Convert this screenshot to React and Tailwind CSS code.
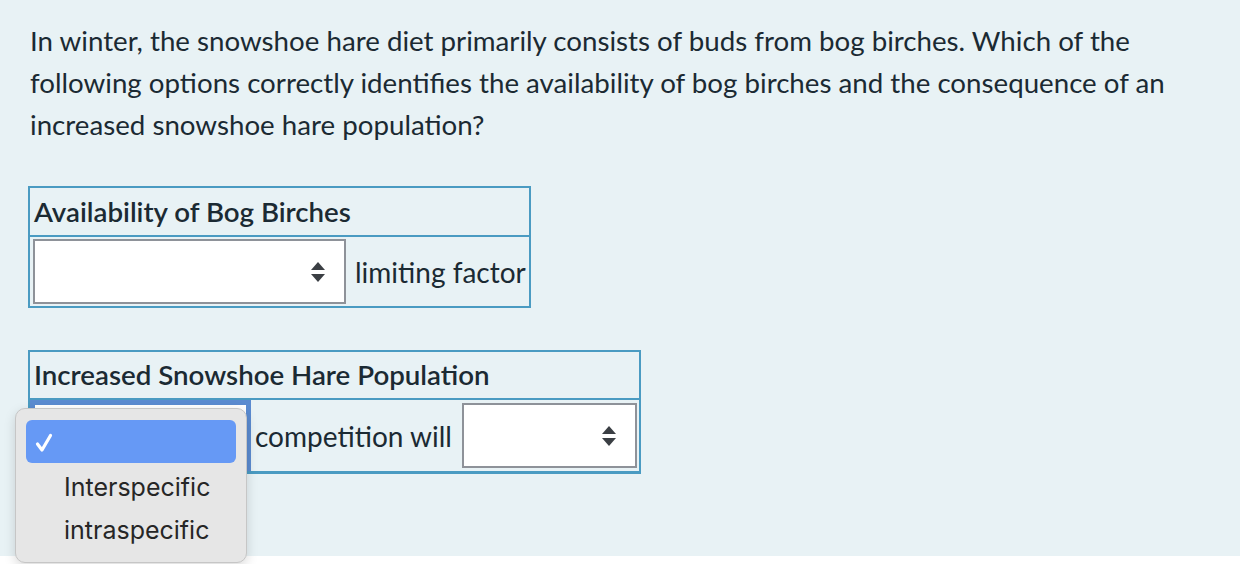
import { useState } from "react";

const font = { fontFamily: "Lato, 'Open Sans', sans-serif" };

function SelectArrows() {
  return (
    <svg width="16" height="24" viewBox="0 0 16 24" className="shrink-0">
      <path d="M8 2 L15 10 H1 Z" fill="#3b3f44" />
      <path d="M8 22 L15 14 H1 Z" fill="#3b3f44" />
    </svg>
  );
}

function SelectBox({ width, focused = false }) {
  return (
    <div
      className={`flex h-[65px] items-center justify-end border-2 border-[#8e9299] bg-white pr-[18px] ${width}`}
    >
      {!focused && <SelectArrows />}
    </div>
  );
}

function Dropdown() {
  const [picked] = useState(0);
  const options = ["", "Interspecific", "intraspecific"];
  return (
    <div
      className="absolute left-[15px] top-[408px] z-10 flex h-[155px] w-[232px] flex-col rounded-[10px] border border-[#c6c6c6] bg-[#e6e6e6] px-[10px] pt-[11px] shadow-[0_4px_12px_rgba(0,0,0,0.15)]"
      style={{ fontFamily: "Inter, 'Liberation Sans', sans-serif" }}
    >
      {options.map((opt, i) => (
        <div
          key={i}
          className={`flex h-[43px] shrink-0 items-center rounded-[6px] pl-[9px] text-[25px] text-[#262626] ${
            i === picked ? "bg-[#6699f5]" : ""
          } ${i === 1 ? "mt-[3px]" : ""}`}
        >
          <span className="w-[29px]">
            {i === picked && (
              <svg width="18" height="20" viewBox="0 0 18 20" className="mt-[3px]">
                <path
                  d="M2.5 11 L7 17 L15.5 2.5"
                  fill="none"
                  stroke="white"
                  strokeWidth="3.2"
                  strokeLinecap="round"
                  strokeLinejoin="round"
                />
              </svg>
            )}
          </span>
          {opt}
        </div>
      ))}
    </div>
  );
}

export default function App() {
  return (
    <div className="min-h-[564px] bg-white">
      <div
        className="relative h-[556px] w-[1240px] bg-[#e8f2f5] px-[30px] pt-[20px] text-[#1b2a33]"
        style={font}
      >
        <p className="text-[27.7px] leading-[42px]">
          In winter, the snowshoe hare diet primarily consists of buds from bog birches. Which of the
          following options correctly identifies the availability of bog birches and the consequence of an
          increased snowshoe hare population?
        </p>

        <div className="-ml-[2px] mt-[40px] w-[503px] border-2 border-[#4a9bc2]">
          <div className="border-b-2 border-[#4a9bc2] px-[4px] pb-[8px] pt-[8px] text-[27.7px] font-semibold leading-[31px]">
            Availability of Bog Birches
          </div>
          <div className="flex items-center gap-[9px] px-[3px] py-[2px]">
            <SelectBox width="w-[313px]" />
            <span className="text-[28px] leading-[30px]">limiting factor</span>
          </div>
        </div>

        <div className="-ml-[2px] mt-[42px] w-[613px] border-2 border-b-[3px] border-[#4a9bc2]">
          <div className="border-b-2 border-[#4a9bc2] px-[4px] pb-[8px] pt-[7px] text-[27.7px] font-semibold leading-[31px]">
            Increased Snowshoe Hare Population
          </div>
          <div className="flex items-center">
            <div className="border-[5px] border-[#5b8bd0] bg-white">
              <div className="h-[61px] w-[211px] bg-white" />
            </div>
            <span className="ml-[4px] text-[28px] leading-[30px]">competition will</span>
            <div className="ml-auto pr-[2px]">
              <SelectBox width="w-[175px]" />
            </div>
          </div>
        </div>

        <Dropdown />
      </div>
    </div>
  );
}
